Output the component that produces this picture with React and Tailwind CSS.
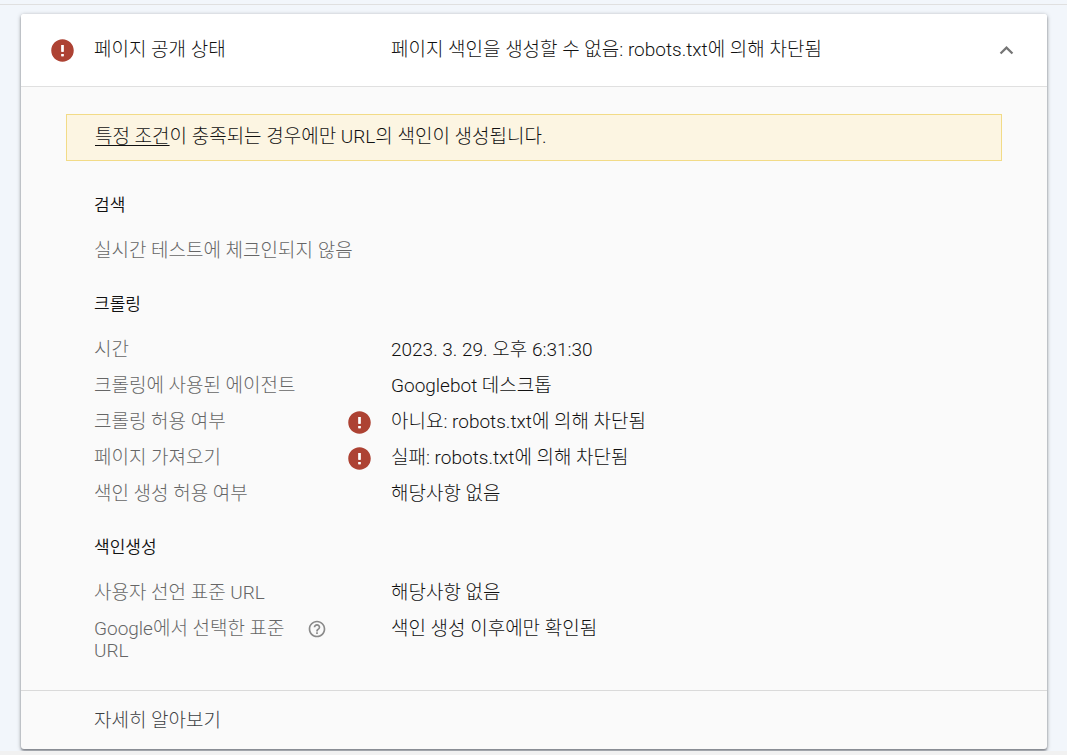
import React, { useState } from "react";

const SECTIONS = [
  {
    title: "검색",
    rows: [{ label: "실시간 테스트에 체크인되지 않음", wide: true }],
  },
  {
    title: "크롤링",
    rows: [
      { label: "시간", value: "2023. 3. 29. 오후 6:31:30" },
      { label: "크롤링에 사용된 에이전트", value: "Googlebot 데스크톱" },
      { label: "크롤링 허용 여부", value: "아니요: robots.txt에 의해 차단됨", error: true },
      { label: "페이지 가져오기", value: "실패: robots.txt에 의해 차단됨", error: true },
      { label: "색인 생성 허용 여부", value: "해당사항 없음" },
    ],
  },
  {
    title: "색인생성",
    rows: [
      { label: "사용자 선언 표준 URL", value: "해당사항 없음" },
      { label: "Google에서 선택한 표준 URL", value: "색인 생성 이후에만 확인됨", help: true },
    ],
  },
];

function ErrorIcon() {
  return (
    <svg viewBox="0 0 24 24" className="size-[27px] shrink-0" aria-hidden="true">
      <path
        fill="#ad4233"
        d="M12 2C6.48 2 2 6.48 2 12s4.48 10 10 10 10-4.48 10-10S17.52 2 12 2zm1 15h-2v-2h2v2zm0-4h-2V7h2v6z"
      />
      <path fill="#fff" d="M11 15h2v2h-2zM11 7h2v6h-2z" />
    </svg>
  );
}

function HelpIcon() {
  return (
    <svg viewBox="0 0 24 24" className="size-5 fill-[#8a8a8a]" aria-hidden="true">
      <path d="M11 18h2v-2h-2v2zm1-16C6.48 2 2 6.48 2 12s4.48 10 10 10 10-4.48 10-10S17.52 2 12 2zm0 18c-4.41 0-8-3.59-8-8s3.59-8 8-8 8 3.59 8 8-3.59 8-8 8zm0-14c-2.21 0-4 1.79-4 4h2c0-1.1.9-2 2-2s2 .9 2 2c0 2-3 1.75-3 5h2c0-2.25 3-2.5 3-5 0-2.21-1.79-4-4-4z" />
    </svg>
  );
}

function ChevronIcon({ open }) {
  return (
    <svg
      viewBox="0 0 24 24"
      className={`size-[27px] fill-[#757575] ${open ? "" : "rotate-180"}`}
      aria-hidden="true"
    >
      <path d="M12 8l-6 6 1.41 1.41L12 10.83l4.59 4.58L18 14z" />
    </svg>
  );
}

function Row({ label, value, error, help, wide }) {
  return (
    <div className="flex">
      <dt className={wide ? "text-[#666]" : "w-[208px] shrink-0 text-[#666]"}>{label}</dt>
      {!wide && (
        <dd className="flex">
          <span className="flex h-[22px] w-[89px] shrink-0 items-center justify-between pr-[18px]">
            <span className="flex w-[30px] items-center justify-center">
              {help && (
                <button type="button" aria-label="도움말">
                  <HelpIcon />
                </button>
              )}
            </span>
            {error && <ErrorIcon />}
          </span>
          <span>{value}</span>
        </dd>
      )}
    </div>
  );
}

export default function App() {
  const [open, setOpen] = useState(true);

  return (
    <div className="bg-[#f2f6fb] pt-1 font-['Roboto','Noto_Sans_CJK_KR_Light','Noto_Sans_CJK_KR',sans-serif] text-[19px] leading-[22px] font-light text-[#111]">
      <div className="border-t border-[#e0e0e0] px-5 pt-[9px]">
        <section className="ml-px rounded-[3px] bg-[#fafafa] shadow-[0_1px_4px_rgba(0,0,0,0.35),0_2px_2px_rgba(60,64,80,0.4)]">
          <button
            type="button"
            aria-expanded={open}
            onClick={() => setOpen(!open)}
            className="flex h-[73px] w-full items-center rounded-t-[3px] border-b border-[#e0e0e0] bg-white pr-[27px] pl-7 text-left"
          >
            <ErrorIcon />
            <span className="ml-[18px] w-[297px] shrink-0">페이지 공개 상태</span>
            <span className="grow">페이지 색인을 생성할 수 없음: robots.txt에 의해 차단됨</span>
            <ChevronIcon open={open} />
          </button>

          {open && (
            <div className="px-[45px] pt-[27px] pb-7">
              <p className="mb-[33px] border border-[#f2db87] bg-[#fcf5e2] px-7 pt-[11px] pb-3">
                <a href="#conditions" className="underline decoration-1 underline-offset-2">
                  특정 조건
                </a>
                이 충족되는 경우에만 URL의 색인이 생성됩니다.
              </p>
              <div className="flex flex-col gap-[31px] px-7">
                {SECTIONS.map((section) => (
                  <div key={section.title}>
                    <h3 className="mb-[26px] font-['Noto_Sans_CJK_KR_DemiLight','Noto_Sans_CJK_KR',sans-serif] text-[17px] leading-5">
                      {section.title}
                    </h3>
                    <dl className="flex flex-col gap-[14px]">
                      {section.rows.map((row) => (
                        <Row key={row.label} {...row} />
                      ))}
                    </dl>
                  </div>
                ))}
              </div>
            </div>
          )}

          <div className="flex h-[59px] items-center border-t border-[#dadada] px-[73px]">
            <a href="#learn-more" className="pt-px text-[#3c4043]">
              자세히 알아보기
            </a>
          </div>
        </section>
      </div>
      <div className="mt-[2px] h-1 bg-[#f1f1f1]" />
    </div>
  );
}
